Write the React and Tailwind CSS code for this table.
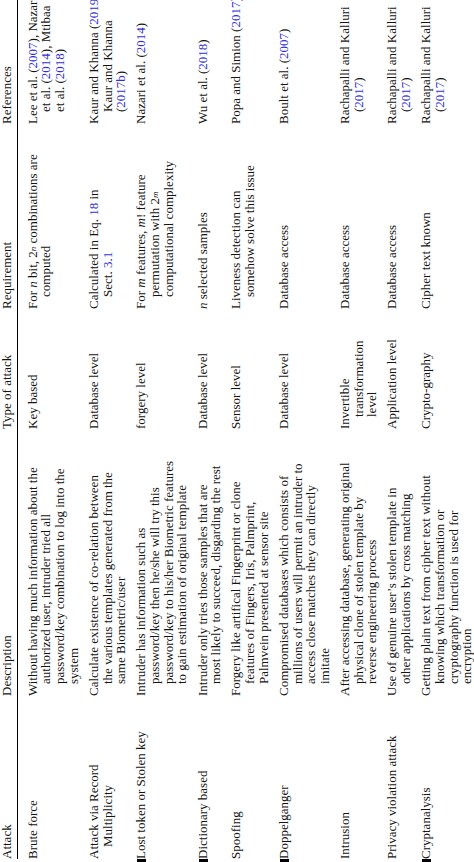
import React from 'react';

// blue cross-reference text (years, equation / section numbers)
const B = ({ children }) => <span className="text-[#2f2fd6]">{children}</span>;

const rows = [
    {
        attack: ['Brute force'],
        desc: [
            'Without having much information about the',
            'authorized user, intruder tried all',
            'password/key combination to log into the',
            'system',
        ],
        type: ['Key based'],
        req: [
            <>For <i>n</i> bit, 2<sup className="text-[9px] relative -top-[1px]"><i>n</i></sup> combinations are</>,
            'computed',
        ],
        refs: [
            <>Lee et al. (<B>2007</B>), Nazari</>,
            <>et al. (<B>2014</B>), Mtibaa</>,
            <>et al. (<B>2018</B>)</>,
        ],
    },
    {
        attack: ['Attack via Record', 'Multiplicity'],
        desc: [
            'Calculate existence of co-relation between',
            'the various templates generated from the',
            'same Biometric/user',
        ],
        type: ['Database level'],
        req: [<>Calculated in Eq. <B>18</B> in</>, <>Sect. <B>3.1</B></>],
        refs: [<>Kaur and Khanna (<B>2019</B>),</>, 'Kaur and Khanna', <>(<B>2017b</B>)</>],
    },
    {
        attack: ['Lost token or Stolen key'],
        mark: true,
        desc: [
            'Intruder has information such as',
            'password/key then he/she will try this',
            'password/key to his/her Biometric features',
            'to gain estimation of original template',
        ],
        type: ['forgery level'],
        req: [
            <>For <i>m</i> features, <i>m</i>! feature</>,
            <>permutation with 2<sup className="text-[9px] relative -top-[1px]"><i>m</i></sup></>,
            'computational complexity',
        ],
        refs: [<>Nazari et al. (<B>2014</B>)</>],
    },
    {
        attack: ['Dictionary based'],
        mark: true,
        desc: [
            'Intruder only tries those samples that are',
            'most likely to succeed, disgarding the rest',
        ],
        type: ['Database level'],
        req: [<><i>n</i> selected samples</>],
        refs: [<>Wu et al. (<B>2018</B>)</>],
    },
    {
        attack: ['Spoofing'],
        desc: [
            'Forgery like artifical Fingerprint or clone',
            'features of Fingers, Iris, Palmprint,',
            'Palmvein presented at sensor site',
        ],
        type: ['Sensor level'],
        req: ['Liveness detection can', 'somehow solve this issue'],
        refs: [<>Popa and Simion (<B>2017</B>)</>],
    },
    {
        attack: ['Doppelganger'],
        mark: true,
        desc: [
            'Compromised databases which consists of',
            'millions of users will permit an intruder to',
            'access close matches they can directly',
            'imitate',
        ],
        type: ['Database level'],
        req: ['Database access'],
        refs: [<>Boult et al. (<B>2007</B>)</>],
    },
    {
        attack: ['Intrusion'],
        desc: [
            'After accessing database, generating original',
            'physical clone of stolen template by',
            'reverse engineering process',
        ],
        type: ['Invertible', 'transformation', 'level'],
        req: ['Database access'],
        refs: ['Rachapalli and Kalluri', <>(<B>2017</B>)</>],
    },
    {
        attack: ['Privacy violation attack'],
        desc: [
            'Use of genuine user’s stolen template in',
            'other applications by cross matching',
        ],
        type: ['Application level'],
        req: ['Database access'],
        refs: ['Rachapalli and Kalluri', <>(<B>2017</B>)</>],
    },
    {
        attack: ['Cryptanalysis'],
        mark: true,
        desc: [
            'Getting plain text from cipher text without',
            'knowing which transformation or',
            'cryptography function is used for',
            'encryption',
        ],
        type: ['Crypto-graphy'],
        req: ['Cipher text known'],
        refs: ['Rachapalli and Kalluri', <>(<B>2017</B>)</>],
    },
];

const Cell = ({ lines, mark }) => (
    <div className="whitespace-nowrap">
        {lines.map((line, i) => (
            <div key={i} className={i ? 'pl-[12px]' : ''}>
                {i === 0 && mark && <span className="inline-block w-[3px] h-[9px] bg-black -ml-[3px] align-[-1px]"></span>}
                {line}
            </div>
        ))}
    </div>
);

const cols = 'grid grid-cols-[163px_267px_120px_185px_1fr]';

export default function App() {
    return (
        <div className="w-[474px] h-[862px] overflow-hidden bg-white">
            {/* table is laid out upright, then turned a quarter-turn left */}
            <div className="w-[862px] h-[474px] origin-top-left -rotate-90 translate-y-[862px] pl-[3px] text-[13px] leading-[13.7px] text-[#141414] font-['Liberation_Serif','Times_New_Roman',serif]">
                <div className={`${cols} h-[17.5px] border-b-[1.5px] border-black`}>
                    <div>Attack</div>
                    <div>Description</div>
                    <div>Type of attack</div>
                    <div>Requirement</div>
                    <div className="whitespace-nowrap">References</div>
                </div>
                <div className="pt-[5px]">
                    {rows.map((r, i) => (
                        <div key={i} className={`${cols} py-[3.2px]`}>
                            <Cell lines={r.attack} mark={r.mark} />
                            <Cell lines={r.desc} />
                            <Cell lines={r.type} />
                            <Cell lines={r.req} />
                            <Cell lines={r.refs} />
                        </div>
                    ))}
                </div>
            </div>
        </div>
    );
}
